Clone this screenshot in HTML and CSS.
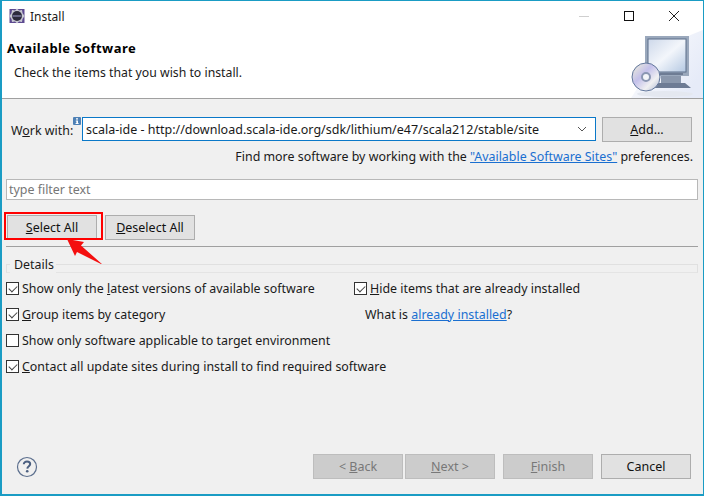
FILE: index.html
```
<!DOCTYPE html>
<html lang="en">
<head>
<meta charset="utf-8">
<title>Install</title>
<link rel="stylesheet" href="styles.css">
</head>
<body>
<div class="window">
  <div class="titlebar">
    <svg class="app-icon" viewBox="0 0 16 16" width="16" height="16">
      <rect x="0.5" y="1" width="15" height="14" fill="#5d4a90"/>
      <path d="M8 0.5L10 2.5L13 2L13.5 5L15.5 8L13.5 11L13 14L10 13.5L8 15.5L6 13.5L3 14L2.5 11L0.5 8L2.5 5L3 2L6 2.5Z" fill="#c9c9d2"/>
      <circle cx="8" cy="8" r="5" fill="#2c2a3c"/>
      <rect x="3.5" y="7.2" width="9" height="1.6" fill="#77749a"/>
    </svg>
    <span class="title">Install</span>
    <div class="win-controls">
      <svg width="12" height="12" viewBox="0 0 12 12"><path d="M1 6.5H11" stroke="#cfcfcf" fill="none"/></svg>
      <svg width="12" height="12" viewBox="0 0 12 12"><rect x="1.5" y="1.5" width="9" height="9" fill="none" stroke="#111"/></svg>
      <svg width="12" height="12" viewBox="0 0 12 12"><path d="M1 1L11 11M11 1L1 11" fill="none" stroke="#222"/></svg>
    </div>
  </div>
  <div class="banner">
    <div class="banner-text">
      <h1>Available Software</h1>
      <p>Check the items that you wish to install.</p>
    </div>
    <svg class="banner-art" width="76" height="70" viewBox="0 0 76 70">
      <defs>
        <linearGradient id="sky" x1="0" y1="0" x2="1" y2="0.6"><stop offset="0" stop-color="#fff"/><stop offset="1" stop-color="#e6ebf8"/></linearGradient>
        <linearGradient id="scr" x1="0" y1="0" x2="1" y2="1"><stop offset="0" stop-color="#cdd8ea"/><stop offset="0.5" stop-color="#f3f6fb"/><stop offset="1" stop-color="#b4c8e2"/></linearGradient>
        <linearGradient id="disc" x1="0" y1="0" x2="1" y2="1"><stop offset="0" stop-color="#f4f4da"/><stop offset="0.4" stop-color="#c3c0ea"/><stop offset="0.7" stop-color="#f0f0f2"/><stop offset="1" stop-color="#aab4d0"/></linearGradient>
      </defs>
      <path d="M4 70L30 30Q52 10 76 2V70Z" fill="url(#sky)"/>
      <ellipse cx="38" cy="66" rx="28" ry="3" fill="#e4e8f0"/>
      <rect x="18" y="8" width="44" height="40" fill="#9aa8bc"/>
      <rect x="21" y="11" width="38" height="33" fill="url(#scr)" stroke="#5d6f8a"/>
      <rect x="30" y="45" width="26" height="2" fill="#6e7c94"/>
      <path d="M34 48H54V55H34Z" fill="#8a97ac"/>
      <path d="M30 55H58L64 60H26Z" fill="#6d7b94"/>
      <circle cx="19" cy="49" r="14" fill="url(#disc)" stroke="#62779c"/>
      <circle cx="19" cy="49" r="4" fill="#f4f6fa" stroke="#8b97b3" stroke-width="2"/>
    </svg>
  </div>
  <div class="content">
    <div class="work-row">
      <label class="work-label">W<span class="ul">o</span>rk with:</label>
      <svg class="info" width="8" height="8" viewBox="0 0 8 8"><rect width="8" height="8" rx="1" fill="#4e80b5"/><path d="M3 1.2H5V2.6H3ZM2.8 3.5H5V6H5.6V7H2.6V6H3.4V4.4H2.8Z" fill="#fff"/></svg>
      <div class="combo">
        <span>scala-ide - http://download.scala-ide.org/sdk/lithium/e47/scala212/stable/site</span>
        <svg width="10" height="6" viewBox="0 0 10 6"><path d="M1 1L5 5L9 1" fill="none" stroke="#555"/></svg>
      </div>
      <button class="btn add"><span class="ul">A</span>dd...</button>
    </div>
    <p class="more">Find more software by working with the <a href="#">"Available Software Sites"</a> preferences.</p>
    <div class="filter">type filter text</div>
    <div class="select-row">
      <button class="btn"><span class="ul">S</span>elect All</button>
      <button class="btn"><span class="ul">D</span>eselect All</button>
      <div class="red-box"></div>
      <svg class="arrow" width="38" height="27" viewBox="0 0 38 27"><path d="M1 0L18 3L15 6.5L37 26L11 13L9 17Z" fill="#f40f0f"/></svg>
    </div>
    <div class="rule"></div>
    <div class="details-head"><span>Details</span></div>
    <div class="options">
      <div class="col col-left">
        <div class="opt"><span class="cb on"></span><span>Show only the <span class="ul">l</span>atest versions of available software</span></div>
        <div class="opt"><span class="cb on"></span><span><span class="ul">G</span>roup items by category</span></div>
        <div class="opt"><span class="cb"></span><span>Show only software applicable to target environment</span></div>
        <div class="opt"><span class="cb on"></span><span><span class="ul">C</span>ontact all update sites during install to find required software</span></div>
      </div>
      <div class="col">
        <div class="opt"><span class="cb on"></span><span><span class="ul">H</span>ide items that are already installed</span></div>
        <div class="opt what">What is&nbsp;<a href="#">already installed</a>?</div>
      </div>
    </div>
    <div class="footer">
      <svg class="help" width="22" height="22" viewBox="0 0 22 22"><circle cx="11" cy="11" r="9.5" fill="none" stroke="#5c6f8e" stroke-width="1.2"/><path d="M7.8 8.3C7.8 6.4 9.3 5.5 11 5.5C12.9 5.5 14.2 6.6 14.2 8.1C14.2 10.2 11.5 10.2 11.3 12.6" fill="none" stroke="#4b5f80" stroke-width="2"/><circle cx="11.2" cy="15.3" r="1.3" fill="#4b5f80"/></svg>
      <div class="nav">
        <button class="btn off">&lt; <span class="ul">B</span>ack</button>
        <button class="btn off"><span class="ul">N</span>ext &gt;</button>
        <button class="btn off finish"><span class="ul">F</span>inish</button>
        <button class="btn cancel">Cancel</button>
      </div>
    </div>
  </div>
</div>
</body>
</html>
```
FILE: styles.css
```
* { box-sizing: border-box; }
html, body { margin: 0; padding: 0; }
body { width: 704px; height: 496px; overflow: hidden; font-family: "Noto Sans", sans-serif; font-size: 12.42px; color: #1a1a1a; white-space: nowrap; }
a { color: #1a6fd0; }
p, h1 { margin: 0; }
.ul { text-decoration: underline; }
.window { width: 704px; height: 496px; border: 1px solid #1a9cc4; border-width: 1px 1px 2px 2px; background: #f0f0f0; display: flex; flex-direction: column; }
.titlebar { height: 30px; background: #fff; display: flex; align-items: center; padding-left: 7px; flex: none; }
.app-icon { margin-right: 5px; }
.title { font-size: 12px; }
.win-controls { margin-left: auto; display: flex; gap: 33px; padding-right: 23px; }
.banner { height: 68px; flex: none; background: #fff; border-bottom: 1px solid #a0a0a0; display: flex; position: relative; }
.banner-text { padding: 7px 0 0 5px; }
.banner h1 { font-size: 13px; font-weight: 700; line-height: 20px; color: #000; letter-spacing: 0.44px; }
.banner p { padding: 6px 0 0 7px; line-height: 18px; font-size: 12.28px; }
.banner-art { position: absolute; right: 0; bottom: 0; }
.content { flex: 1; display: flex; flex-direction: column; padding: 0 4px; position: relative; min-height: 0; }
.work-row { display: flex; align-items: flex-start; margin-top: 18px; }
.work-label { padding: 5px 0 0 5px; width: 67px; line-height: 18px; }
.info { margin: 0; }
.combo { width: 514px; height: 24px; margin-left: 1px; border: 1px solid #0a78c8; background: #fff; display: flex; align-items: center; justify-content: space-between; padding: 0 8px 0 3px; font-size: 12.5px; }
.btn { font: inherit; font-size: 12.5px; color: #111; width: 90px; height: 25px; border: 1px solid #adadad; background: #e1e1e1; padding: 0; }
.add { margin-left: 6px; }
.more { text-align: right; line-height: 18px; margin: 6px 6px 0 0; }
.filter { margin: 13px 0 0 0; width: 692px; height: 21px; border: 1px solid #b8b8b8; background: #fff; color: #767676; padding-left: 2px; line-height: 19px; }
.select-row { display: flex; gap: 8px; margin: 15px 0 0 1px; position: relative; }
.red-box { position: absolute; left: -3px; top: -3px; width: 99px; height: 28px; border: 2px solid #f00; }
.arrow { position: absolute; left: 59px; top: 24px; }
.rule { margin: 6px 0 0 0; width: 692px; height: 1px; background: #a0a0a0; }
.details-head { margin-top: 17px; width: 692px; height: 9px; border: 1px solid #e0e0e0; border-bottom-color: #e4e4e4; position: relative; }
.details-head span { position: absolute; left: 3px; top: -9px; padding: 0 2px 0 4px; background: #f0f0f0; line-height: 18px; }
.options { display: flex; margin-top: 2px; }
.col { display: flex; flex-direction: column; }
.col-left { width: 348px; }
.opt { display: flex; align-items: center; height: 26px; }
.what { padding-left: 11px; }
.cb { width: 13px; height: 13px; border: 1px solid #333; background: #fff; margin-right: 3px; flex: none; position: relative; }
.cb.on::after { content: ""; position: absolute; left: 2px; top: 1px; width: 7px; height: 4px; border: solid #444; border-width: 0 0 1px 1px; transform: rotate(-45deg) translate(-1px, 1px); }
.footer { margin-top: auto; margin-bottom: 15px; display: flex; align-items: center; padding-left: 10px; }
.nav { margin-left: auto; display: flex; gap: 2px; padding-right: 8px; }
.off { background: #ccc; color: #787878; border-color: #bdbdbd; }
.finish { margin-left: 6px; }
.cancel { margin-left: 6px; }
```
